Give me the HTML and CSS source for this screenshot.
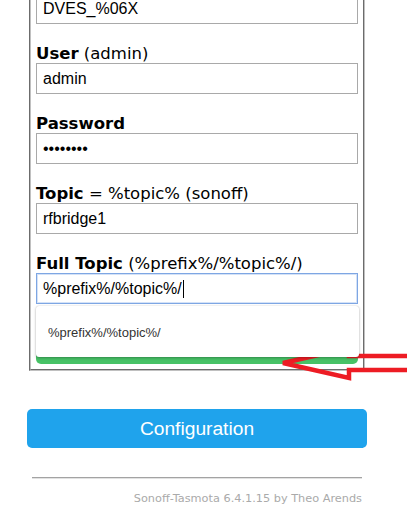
FILE: index.html
```html
<!DOCTYPE html>
<html>
<head>
<meta charset="utf-8">
<link rel="stylesheet" href="styles.css">
</head>
<body>
<div class="page">
  <div class="main">
    <fieldset class="box">
      <input class="field field-first" value="DVES_%06X">
      <div class="lbl"><b>User</b> (admin)</div>
      <input class="field" value="admin">
      <div class="lbl"><b>Password</b></div>
      <input class="field" type="password" value="12345678">
      <div class="lbl"><b>Topic</b> = %topic% (sonoff)</div>
      <input class="field" value="rfbridge1">
      <div class="lbl"><b>Full Topic</b> (%prefix%/%topic%/)</div>
      <div class="field focus">%prefix%/%topic%/<span class="caret"></span>
        <div class="suggest"><span class="suggest-item">%prefix%/%topic%/</span></div>
      </div>
      <button class="btn save">Save</button>
    </fieldset>
    <button class="btn conf">Configuration</button>
    <div class="foot">
      <hr class="rule">
      <span class="credit">Sonoff-Tasmota 6.4.1.15 by Theo Arends</span>
    </div>
  </div>
  <svg class="arrow" width="407" height="505" viewBox="0 0 407 505">
    <path d="M410 356 H349 V348 L283 363 L349 378 V370 H410" fill="none" stroke="#ed1c24" stroke-width="4.5" stroke-linejoin="miter"/>
  </svg>
</div>
</body>
</html>
```
FILE: styles.css
```css
html, body {
  margin: 0;
  padding: 0;
  background: #fff;
  overflow: hidden;
}
.page {
  position: relative;
  width: 407px;
  height: 505px;
  overflow: hidden;
  font-family: "DejaVu Sans", Verdana, sans-serif;
  font-size: 16px;
  color: #000;
}
.main {
  width: 340px;
  margin-left: 27px;
}
.box {
  margin: -14px 2px 0 2px;
  border: 2px groove #c0c0c0;
  padding: 5px;
  min-width: 0;
}
.field {
  display: block;
  box-sizing: border-box;
  width: 100%;
  height: 31px;
  margin: 0;
  padding: 0 6px;
  border: 1px solid #a9a9a9;
  font-family: "Liberation Sans", Arial, sans-serif;
  font-size: 16px;
  line-height: 29px;
  color: #000;
  background: #fff;
  outline: none;
}
.field-first {
  margin-top: 0;
}
.lbl {
  margin-top: 20px;
  height: 19px;
  line-height: 19px;
  font-size: 16.5px;
  white-space: nowrap;
}
.focus {
  position: relative;
  z-index: 2;
  border-color: #7ea6e3;
  box-shadow: inset 0 0 0 1px #d4e2f7;
}
.caret {
  display: inline-block;
  width: 1px;
  height: 18px;
  background: #000;
  vertical-align: -4px;
  margin-left: 1px;
}
.suggest {
  position: absolute;
  left: -1px;
  top: 32px;
  width: 323px;
  height: 51px;
  box-sizing: border-box;
  background: #fff;
  border-radius: 3px;
  box-shadow: 0 1px 3px rgba(0, 0, 0, 0.28), 0 0 1px rgba(0, 0, 0, 0.2);
  display: flex;
  align-items: center;
  padding-left: 12px;
  padding-top: 2px;
}
.suggest-item {
  font-family: "Liberation Sans", Arial, sans-serif;
  font-size: 13px;
  color: #333;
}
.btn {
  display: block;
  width: 100%;
  border: 0;
  border-radius: 5px;
  color: #fff;
  font-family: "Liberation Sans", Arial, sans-serif;
  font-size: 19.2px;
  padding: 0;
  margin: 0;
}
.save {
  margin-top: 22px;
  height: 38px;
  line-height: 38px;
  background: #47c266;
}
.conf {
  margin-top: 38px;
  height: 39px;
  line-height: 39px;
  background: #1fa3ec;
}
.foot {
  padding: 0 5px;
  text-align: right;
  margin-top: 29px;
}
.rule {
  margin: 0 0 8px 0;
  height: 0;
  border: 0;
  border-top: 1px solid #a3a3a3;
  border-bottom: 1px solid #e2e2e2;
}
.credit {
  font-size: 11.3px;
  line-height: 13px;
  color: #aaa;
}
.arrow {
  position: absolute;
  left: 0;
  top: 0;
  pointer-events: none;
}
```
